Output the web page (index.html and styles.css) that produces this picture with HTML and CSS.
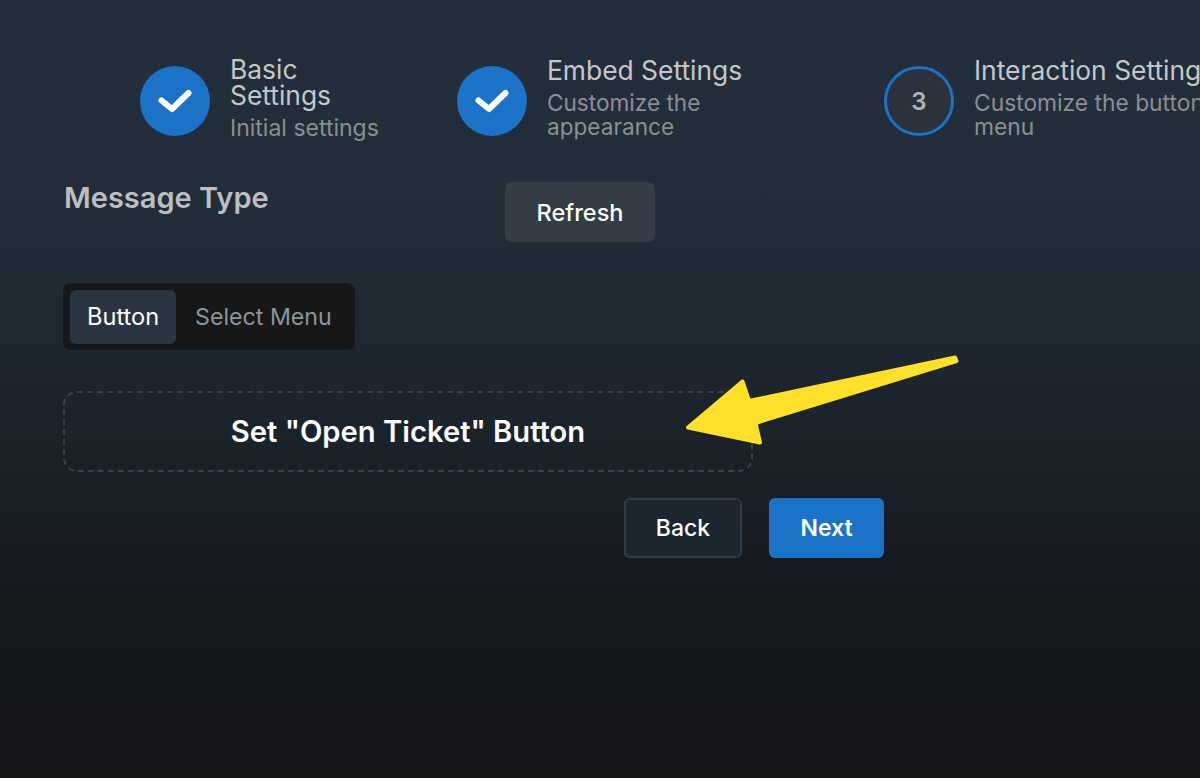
FILE: index.html
```html
<!DOCTYPE html>
<html lang="en">
<head>
<meta charset="utf-8">
<title>Interaction Settings</title>
<link rel="stylesheet" href="styles.css">
</head>
<body>
<main class="page">
  <ol class="stepper">
    <li class="step step-basic">
      <span class="dot dot-done"><svg viewBox="0 0 34 26" width="34" height="26"><path d="M3.500 12.500 14 21 30.500 5" fill="none" stroke="#fff" stroke-width="6" stroke-linecap="round" stroke-linejoin="round"/></svg></span>
      <div class="step-text">
        <div class="step-title">Basic Settings</div>
        <div class="step-sub">Initial settings</div>
      </div>
    </li>
    <li class="step step-embed">
      <span class="dot dot-done"><svg viewBox="0 0 34 26" width="34" height="26"><path d="M3.500 12.500 14 21 30.500 5" fill="none" stroke="#fff" stroke-width="6" stroke-linecap="round" stroke-linejoin="round"/></svg></span>
      <div class="step-text">
        <div class="step-title">Embed Settings</div>
        <div class="step-sub">Customize the appearance</div>
      </div>
    </li>
    <li class="step step-interaction">
      <span class="dot dot-current">3</span>
      <div class="step-text">
        <div class="step-title">Interaction Settings</div>
        <div class="step-sub">Customize the button menu</div>
      </div>
    </li>
  </ol>

  <div class="type-row">
    <h2 class="type-heading">Message Type</h2>
    <button class="btn btn-refresh">Refresh</button>
  </div>

  <div class="segmented">
    <span class="seg seg-active">Button</span>
    <span class="seg">Select Menu</span>
  </div>

  <div class="dropzone">Set "Open Ticket" Button</div>

  <div class="actions">
    <button class="btn btn-back">Back</button>
    <button class="btn btn-next">Next</button>
  </div>
</main>

<svg class="arrow" viewBox="0 0 1200 778" width="1200" height="778" aria-hidden="true">
  <path d="M955 357.5 749 401 742.5 381.5 688 427.5 760 442.5 755.500 423 956.500 361Z" fill="#ffe02a" stroke="#ffe02a" stroke-width="4" stroke-linejoin="round"/>
</svg>
</body>
</html>
```

FILE: styles.css
```css
* { box-sizing: border-box; }
html, body { margin: 0; height: 100%; }
body {
  position: relative;
  width: 1200px;
  height: 778px;
  overflow: hidden;
  font-family: Inter, "Liberation Sans", sans-serif;
  background: linear-gradient(180deg, #222e3b 0, #212d39 200px, #1e2833 320px, #1a222a 440px, #15191e 600px, #131518 700px, #131416 100%);
  color: #fff;
}
.page { padding: 54px 0 0 64px; width: 1200px; }

.stepper {
  list-style: none;
  margin: 0 0 0 76px;
  padding: 0;
  display: flex;
  gap: 78px;
  width: 1100px;
}
.step { display: flex; gap: 20px; align-items: center; flex: none; height: 94px; }
.step-text { padding-bottom: 7px; }
.step-basic .step-text { width: 149px; }
.step-embed .step-text { width: 260px; }
.step-interaction .step-text { width: 232px; }
.step-interaction { margin-left: -1px; }
.dot {
  flex: none;
  width: 70px;
  height: 70px;
  border-radius: 50%;
  display: flex;
  align-items: center;
  justify-content: center;
}
.dot-done { background: #1c72c6; }
.dot-current {
  border: 3px solid #1c72c6;
  background: #2a333d;
  color: #b0b3b8;
  font-size: 24px;
  font-weight: 600;
}
.step-title { font-size: 26.4px; line-height: 26px; color: #c6c7c9; white-space: nowrap; }
.step-basic .step-title { white-space: normal; }
.step-sub { font-size: 22.8px; line-height: 24px; margin-top: 8px; color: #8b8f94; }
.step-basic .step-sub { font-size: 23px; }
.step-embed .step-sub { font-size: 22.6px; }

.type-row { display: flex; align-items: flex-start; margin-top: 34px; }
.type-heading {
  margin: 0;
  width: 441px;
  font-size: 29px;
  line-height: 32px;
  font-weight: 600;
  color: #bcbec2;
}
.btn {
  font-family: inherit;
  font-size: 23px;
  font-weight: 500;
  color: #fff;
  border-radius: 6px;
  padding: 0;
  cursor: pointer;
}
.btn-refresh {
  width: 150px;
  height: 60px;
  border: 0;
  background: #343c46;
  font-size: 23.5px;
}
.segmented {
  display: inline-flex;
  align-items: center;
  margin-top: 41px;
  padding: 7px;
  height: 67px;
  width: 292px;
  margin-left: -1px;
  background: #151719;
  border-radius: 8px;
}
.seg { font-size: 23.2px; color: #8f9499; padding: 0 19px; line-height: 54px; height: 54px; white-space: nowrap; }
.seg-active { color: #fff; background: #2a3541; border-radius: 6px; width: 106px; padding: 0 17px; font-size: 23.6px; }

.dropzone {
  margin-top: 41px;
  width: 690px;
  height: 81px;
  margin-left: -1px;
  border: 2px dashed #38414b;
  border-radius: 14px;
  display: flex;
  align-items: center;
  justify-content: center;
  font-size: 29.2px;
  font-weight: 600;
  color: #fbfbfb;
}
.actions { display: flex; gap: 27px; margin-top: 26px; margin-left: 560px; }
.btn-back { width: 118px; height: 60px; background: #1b2630; border: 2px solid #2f3a45; }
.btn-next { width: 115px; height: 60px; background: #1c72c6; border: 0; font-weight: 600; }
.arrow { position: absolute; left: 0; top: 0; pointer-events: none; }
```
